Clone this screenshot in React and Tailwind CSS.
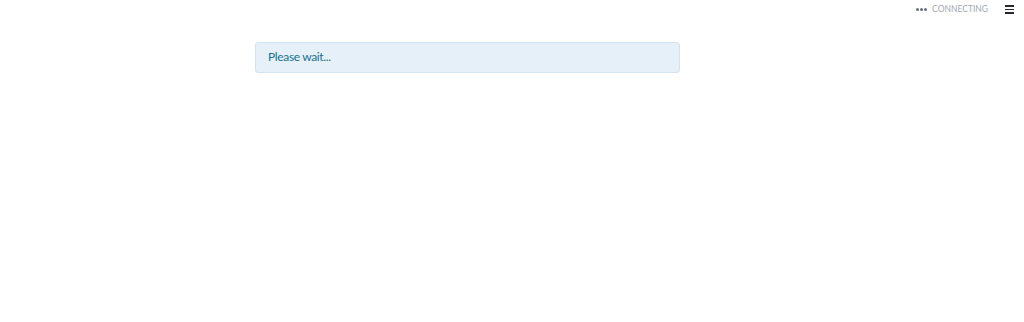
export default function App() {
  return (
    <div className="relative h-[322px] w-[1024px] bg-white" style={{ fontFamily: 'Lato, "Noto Sans", sans-serif' }}>
      <div className="absolute right-[10px] top-[3px] flex items-center">
        <div className="flex items-center gap-[1px] mr-[5px]">
          <span className="h-[3px] w-[3px] rounded-full bg-[#6b7080]" />
          <span className="h-[3px] w-[3px] rounded-full bg-[#6b7080]" />
          <span className="h-[3px] w-[3px] rounded-full bg-[#6b7080]" />
        </div>
        <span className="text-[8.5px] text-[#a3a8b4]">CONNECTING</span>
        <div className="ml-[17px] flex flex-col gap-[2px]">
          <span className="h-[1.5px] w-[9px] bg-[#262730]" />
          <span className="h-[1.5px] w-[9px] bg-[#262730]" />
          <span className="h-[1.5px] w-[9px] bg-[#262730]" />
        </div>
      </div>
      <div className="pt-[42px] flex">
        <div className="ml-[255px] flex h-[31px] w-[425px] items-center rounded-[3px] border border-[#d3e3f0] bg-[#e6f0f8] px-[12px] pb-[1px]">
          <span className="text-[12px] tracking-[-0.35px] text-[#16728f]">Please wait...</span>
        </div>
      </div>
    </div>
  );
}
